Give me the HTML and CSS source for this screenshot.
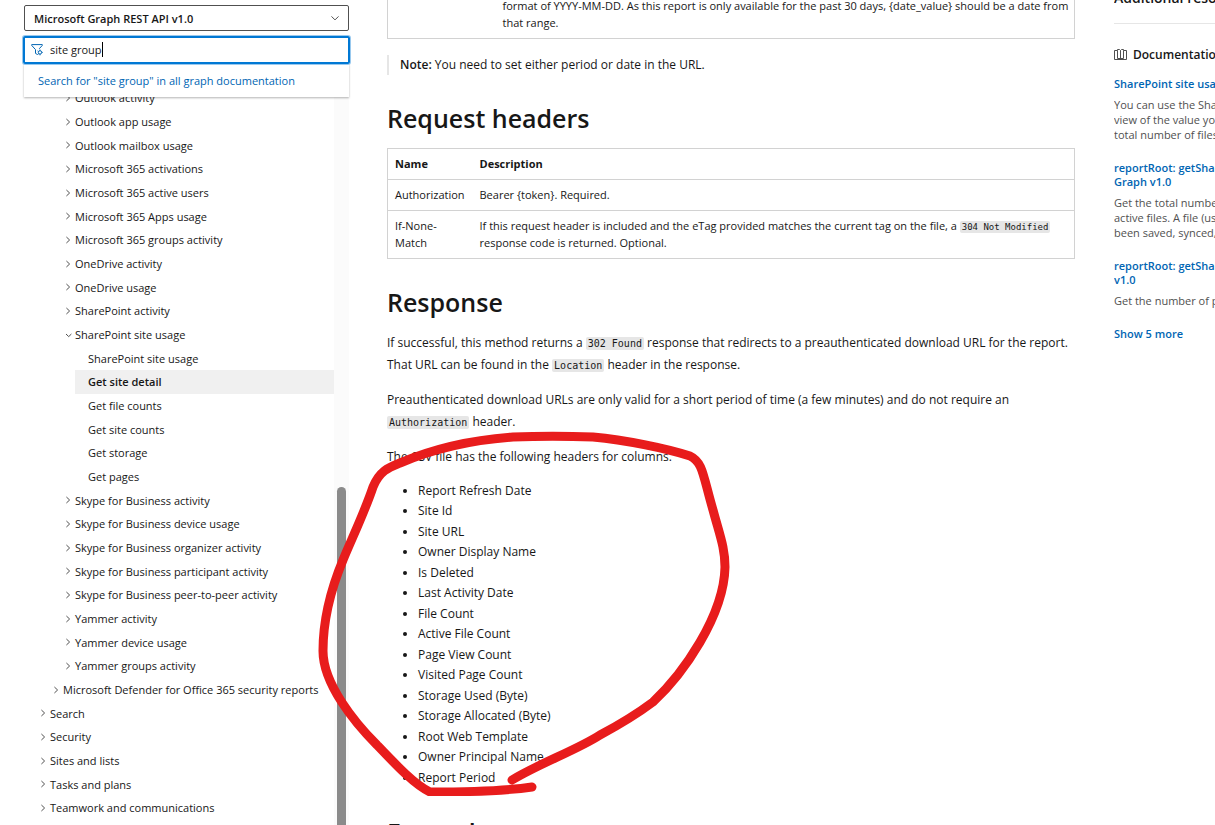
FILE: index.html
```
<!DOCTYPE html>
<html lang="en">
<head>
	<meta charset="UTF-8">
	<title>reportRoot: getSharePointSiteUsageDetail</title>
	<meta name="viewport" content="width=device-width, initial-scale=1">
	<link rel="stylesheet" href="styles.css">
</head>
<body>
	<svg class="sprite" aria-hidden="true">
		<symbol id="chevron" viewBox="0 0 8 8"><path d="M2.4 1 5.6 4 2.4 7" fill="none" stroke="currentColor"/></symbol>
		<symbol id="chevron-open" viewBox="0 0 8 8"><path d="M2 3 4.7 5.6 7.4 3" fill="none" stroke="currentColor"/></symbol>
		<symbol id="chevron-down" viewBox="0 0 8 8"><path d="M0.5 2.4 4 5.9 7.5 2.4" fill="none" stroke="currentColor"/></symbol>
	</svg>
	<div class="page">
		<nav class="sidebar" aria-label="Table of contents">
			<div class="version">
				<select class="version-select" aria-label="Version">
					<option>Microsoft Graph REST API v1.0</option>
				</select>
				<svg class="version-arrow" aria-hidden="true"><use href="#chevron-down"/></svg>
			</div>
			<label class="filter">
				<svg class="filter-icon" viewBox="0 0 12 12" aria-label="Filter by title">
					<path d="M6.5 10.5 4.5 9.4V5.6L0.7 1.4V0.6H11.3V1.4L8.2 4.8" fill="none" stroke="currentColor"/>
					<circle cx="9" cy="8.4" r="1.7" fill="none" stroke="currentColor"/>
					<path d="M7.8 9.6 6.5 10.5M9 6.7V5.6M10.7 8.4h1M9 10.1v1.2M7.3 7.4 6.6 6.9" fill="none" stroke="currentColor"/>
				</svg>
				<input class="filter-input" type="text" value="site group">
				<span class="caret"></span>
			</label>
			<div class="suggest"><a href="#">Search for "site group" in all graph documentation</a></div>
			<ul class="tree">
				<li class="level-3"><svg><use href="#chevron"/></svg><a href="#">Outlook activity</a></li>
				<li class="level-3"><svg><use href="#chevron"/></svg><a href="#">Outlook app usage</a></li>
				<li class="level-3"><svg><use href="#chevron"/></svg><a href="#">Outlook mailbox usage</a></li>
				<li class="level-3"><svg><use href="#chevron"/></svg><a href="#">Microsoft 365 activations</a></li>
				<li class="level-3"><svg><use href="#chevron"/></svg><a href="#">Microsoft 365 active users</a></li>
				<li class="level-3"><svg><use href="#chevron"/></svg><a href="#">Microsoft 365 Apps usage</a></li>
				<li class="level-3"><svg><use href="#chevron"/></svg><a href="#">Microsoft 365 groups activity</a></li>
				<li class="level-3"><svg><use href="#chevron"/></svg><a href="#">OneDrive activity</a></li>
				<li class="level-3"><svg><use href="#chevron"/></svg><a href="#">OneDrive usage</a></li>
				<li class="level-3"><svg><use href="#chevron"/></svg><a href="#">SharePoint activity</a></li>
				<li class="level-3"><svg><use href="#chevron-open"/></svg><a href="#">SharePoint site usage</a></li>
				<li class="level-4"><a href="#">SharePoint site usage</a></li>
				<li class="level-4 selected"><a href="#" aria-current="page">Get site detail</a></li>
				<li class="level-4"><a href="#">Get file counts</a></li>
				<li class="level-4"><a href="#">Get site counts</a></li>
				<li class="level-4"><a href="#">Get storage</a></li>
				<li class="level-4"><a href="#">Get pages</a></li>
				<li class="level-3"><svg><use href="#chevron"/></svg><a href="#">Skype for Business activity</a></li>
				<li class="level-3"><svg><use href="#chevron"/></svg><a href="#">Skype for Business device usage</a></li>
				<li class="level-3"><svg><use href="#chevron"/></svg><a href="#">Skype for Business organizer activity</a></li>
				<li class="level-3"><svg><use href="#chevron"/></svg><a href="#">Skype for Business participant activity</a></li>
				<li class="level-3"><svg><use href="#chevron"/></svg><a href="#">Skype for Business peer-to-peer activity</a></li>
				<li class="level-3"><svg><use href="#chevron"/></svg><a href="#">Yammer activity</a></li>
				<li class="level-3"><svg><use href="#chevron"/></svg><a href="#">Yammer device usage</a></li>
				<li class="level-3"><svg><use href="#chevron"/></svg><a href="#">Yammer groups activity</a></li>
				<li class="level-2"><svg><use href="#chevron"/></svg><a href="#">Microsoft Defender for Office 365 security reports</a></li>
				<li class="level-1"><svg><use href="#chevron"/></svg><a href="#">Search</a></li>
				<li class="level-1"><svg><use href="#chevron"/></svg><a href="#">Security</a></li>
				<li class="level-1"><svg><use href="#chevron"/></svg><a href="#">Sites and lists</a></li>
				<li class="level-1"><svg><use href="#chevron"/></svg><a href="#">Tasks and plans</a></li>
				<li class="level-1"><svg><use href="#chevron"/></svg><a href="#">Teamwork and communications</a></li>
			</ul>
			<div class="scrollbar"><div class="thumb"></div></div>
		</nav>

		<main class="content">
			<table class="params">
				<tr>
					<td></td>
					<td>format of YYYY-MM-DD. As this report is only available for the past 30 days, {date_value} should be a date from that range.</td>
				</tr>
			</table>
			<blockquote><strong>Note:</strong> You need to set either period or date in the URL.</blockquote>

			<h2>Request headers</h2>
			<table class="headers">
				<thead>
					<tr><th>Name</th><th>Description</th></tr>
				</thead>
				<tbody>
					<tr><td>Authorization</td><td>Bearer {token}. Required.</td></tr>
					<tr><td>If-None-Match</td><td>If this request header is included and the eTag provided matches the current tag on the file, a <code>304 Not Modified</code> response code is returned. Optional.</td></tr>
				</tbody>
			</table>

			<h2>Response</h2>
			<p>If successful, this method returns a <code>302 Found</code> response that redirects to a preauthenticated download URL for the report. That URL can be found in the <code>Location</code> header in the response.</p>
			<p>Preauthenticated download URLs are only valid for a short period of time (a few minutes) and do not require an <code>Authorization</code> header.</p>
			<p>The CSV file has the following headers for columns.</p>
			<ul class="columns">
				<li>Report Refresh Date</li>
				<li>Site Id</li>
				<li>Site URL</li>
				<li>Owner Display Name</li>
				<li>Is Deleted</li>
				<li>Last Activity Date</li>
				<li>File Count</li>
				<li>Active File Count</li>
				<li>Page View Count</li>
				<li>Visited Page Count</li>
				<li>Storage Used (Byte)</li>
				<li>Storage Allocated (Byte)</li>
				<li>Root Web Template</li>
				<li>Owner Principal Name</li>
				<li>Report Period</li>
			</ul>
			<h2>Example</h2>
		</main>

		<aside class="resources">
			<h2>Additional resources</h2>
			<h3>
				<svg viewBox="0 0 13 12" aria-hidden="true"><path d="M0.5 1.5H3.5V0.5H5.5L6.5 1.5 7.5 0.5H9.5V1.5H12.5V10.5H0.5ZM3.5 1.5V9.5H9.5V1.5M6.5 1.5V10.5" fill="none" stroke="currentColor"/></svg>
				Documentation
			</h3>
			<a href="#">SharePoint site usage</a>
			<p>You can use the SharePoint<br>view of the value you<br>total number of files</p>
			<a href="#">reportRoot: getSharePoint<br>Graph v1.0</a>
			<p>Get the total number<br>active files. A file (user<br>been saved, synced,</p>
			<a href="#">reportRoot: getSharePoint<br>v1.0</a>
			<p>Get the number of pages</p>
			<a href="#">Show 5 more</a>
		</aside>
	</div>

	<!-- pen stroke round the column list -->
	<svg class="pen" viewBox="0 0 420 370" aria-hidden="true">
		<path d="M217 361C190 365 150 366 115 366C100 359 82 340 62 319C40 297 8 258 8 225C8 190 18 158 28 134C38 110 50 85 58 61C65 44 75 41 85 37C120 22 155 14 198 11C225 10 250 10 278 11C310 14 350 22 375 30C388 36 388 50 398 84C405 110 410 122 410 141C409 190 368 248 338 276C322 288 300 301 285 309C262 324 225 337 197 354"/>
	</svg>
</body>
</html>
```

FILE: styles.css
```
* {
	box-sizing: border-box;
}

body {
	margin: 0;
	font-family: "Open Sans", "Noto Sans", sans-serif;
	font-size: 12px;
	color: #171717;
	background-color: #fff;
}

a {
	color: #0065b3;
	text-decoration: none;
}

.sprite {
	display: none;
}

.page {
	display: grid;
	grid-template-columns: 326px minmax(0, 1fr) 101px;
	column-gap: 38px;
	height: 100vh;
	padding-left: 23px;
	overflow: hidden;
}

/* sidebar */

.sidebar {
	display: flex;
	flex-direction: column;
	position: relative;
	height: 100vh;
	padding-top: 5px;
	font-size: 11px;
}

.version {
	position: relative;
	margin: 0 0 5px 1px;
}

.version-select {
	display: block;
	width: 100%;
	height: 26px;
	padding: 0 9px;
	font: inherit;
	font-weight: 600;
	color: #171717;
	background-color: #fff;
	border: 1px solid #505050;
	border-radius: 2px;
	appearance: none;
}

.version-arrow {
	position: absolute;
	top: 9px;
	right: 10px;
	width: 8px;
	height: 8px;
	color: #505050;
}

.filter {
	display: flex;
	align-items: center;
	height: 28px;
	flex: none;
	margin-right: -1px;
	padding: 0 6px 1px;
	border: 2px solid #0078d4;
	border-radius: 2px;
	box-shadow: 0 0 0 1px rgba(0, 120, 212, .4);
}

.filter-icon {
	width: 12px;
	height: 12px;
	margin-right: 7px;
	color: #0065b3;
}

.filter-input {
	field-sizing: content;
	padding: 0;
	font: inherit;
	color: #171717;
	border: 0;
	outline: 0;
}

.caret {
	width: 1px;
	height: 15px;
	background-color: #000;
}

.suggest {
	flex: none;
	height: 33px;
	margin-left: 1px;
	padding-left: 14px;
	line-height: 33px;
	background-color: #fff;
	box-shadow: 0 1px 2px rgba(0, 0, 0, .3);
}

.filter,
.suggest {
	position: relative;
	z-index: 1;
}

.filter {
	z-index: 2;
}

.tree {
	display: flex;
	flex: 1;
	flex-direction: column;
	min-height: 0;
	margin: -11px 15px 5px 0;
	padding: 0;
	list-style: none;
}

.tree li {
	display: flex;
	flex: 1;
	align-items: center;
	max-height: 24px;
	white-space: nowrap;
}

.tree a {
	color: #171717;
}

.tree svg {
	width: 8px;
	height: 8px;
	margin-right: 3px;
	color: #505050;
}

.tree .level-1 {
	margin-left: 16px;
}

.tree .level-2 {
	margin-left: 29px;
}

.tree .level-3 {
	margin-left: 41px;
}

.tree .level-4 {
	margin-left: 52px;
	padding-left: 13px;
}

.tree .selected {
	font-weight: 600;
	background-color: #f0f0f0;
}

.scrollbar {
	position: absolute;
	top: 97px;
	right: 0;
	bottom: 0;
	width: 15px;
	padding: 390px 3px 0;
	background-color: #fbfbfb;
}

.thumb {
	height: 100%;
	background-color: #8b8b8b;
	border-radius: 5px 5px 0 0;
}

/* article */

.content {
	min-width: 0;
	padding-right: 1px;
}

.content h2 {
	margin: 26px 0 13px;
	font-size: 25px;
	font-weight: 600;
	line-height: 34px;
}

.content p {
	margin: 0 0 13px;
	line-height: 22px;
}

.content table {
	width: 100%;
	font-size: 11px;
	line-height: 17px;
	border: 1px solid #d2d2d2;
	border-collapse: collapse;
}

.content th,
.content td {
	padding: 6px 7px 7px;
	text-align: left;
	vertical-align: top;
}

.content tr {
	border-top: 1px solid #d2d2d2;
}

.content .params {
	margin-top: -10px;
}

.params td:first-child {
	width: 108px;
}

.content .params td:last-child {
	padding-right: 0;
}

.headers th:first-child {
	width: 85px;
}

.content blockquote {
	margin: 16px 0 0;
	padding-left: 11px;
	line-height: 20px;
	border-left: 2px solid #e6e6e6;
}

.content strong {
	font-weight: 600;
}

code {
	padding: 1px 2px;
	font-family: "DejaVu Sans Mono", monospace;
	font-size: 10px;
	line-height: 12px;
	background-color: #e6e6e6;
	border-radius: 2px;
}

td code {
	font-size: 9px;
}

.columns {
	margin: 0 0 27px;
	padding-left: 31px;
	line-height: 20px;
}

.columns li:nth-child(even) {
	margin-bottom: 1px;
}

/* right rail */

.resources {
	overflow: hidden;
	font-size: 11px;
	line-height: 15px;
	white-space: nowrap;
}

.resources h2 {
	margin: -12px 0 0;
	padding-bottom: 15px;
	font-size: 14px;
	font-weight: 600;
	line-height: 20px;
	border-bottom: 1px solid #e6e6e6;
}

.resources h3 {
	display: flex;
	gap: 6px;
	align-items: center;
	margin: 21px 0 12px;
	font-size: 12px;
	font-weight: 600;
	line-height: 20px;
}

.resources h3 svg {
	flex: none;
	width: 13px;
	height: 12px;
	color: #505050;
}

.resources a {
	display: block;
	font-weight: 600;
	line-height: 14px;
}

.resources p {
	margin: 6px 0 19px;
	color: #505050;
}

.pen {
	position: absolute;
	top: 426px;
	left: 315px;
	width: 420px;
	height: 370px;
	pointer-events: none;
}

.pen path {
	fill: none;
	stroke: #e81c1c;
	stroke-width: 9;
	stroke-linecap: round;
	stroke-linejoin: round;
}
```
